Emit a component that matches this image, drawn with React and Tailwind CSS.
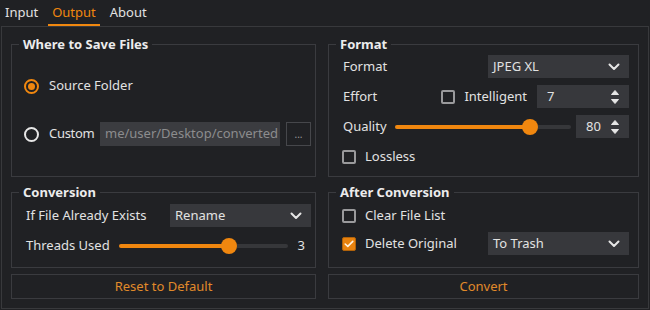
function Chevron() {
  return (
    <svg width="12" height="8" viewBox="0 0 12 8" className="shrink-0">
      <path d="M1.5 1.5 L6 6 L10.5 1.5" fill="none" stroke="#e6e6e6" strokeWidth="2" strokeLinecap="round" strokeLinejoin="round" />
    </svg>
  );
}

function Arrows() {
  return (
    <svg width="10" height="16" viewBox="0 0 10 16" className="shrink-0">
      <path d="M5 1.5 L8.5 5.5 L1.5 5.5 Z" fill="#e6e6e6" stroke="#e6e6e6" strokeWidth="1" strokeLinejoin="round" />
      <path d="M5 14.5 L8.5 10.5 L1.5 10.5 Z" fill="#e6e6e6" stroke="#e6e6e6" strokeWidth="1" strokeLinejoin="round" />
    </svg>
  );
}

function Select({ value, className }) {
  return (
    <div className={`flex h-[23px] items-center justify-between bg-[#37383c] pl-[5px] pr-[9px] ${className}`}>
      <span>{value}</span>
      <Chevron />
    </div>
  );
}

function Spin({ value, className }) {
  return (
    <div className={`flex h-[23px] items-center justify-between bg-[#37383c] pl-[10px] pr-[9px] ${className}`}>
      <span>{value}</span>
      <Arrows />
    </div>
  );
}

function Checkbox({ checked }) {
  if (checked) {
    return (
      <span className="flex h-[14px] w-[14px] shrink-0 items-center justify-center rounded-[2px] border border-[#b0620a] bg-[#e8820e]">
        <svg width="10" height="8" viewBox="0 0 10 8">
          <path d="M1.2 4 L3.8 6.4 L8.8 1.4" fill="none" stroke="#fff3e0" strokeWidth="1.6" strokeLinecap="round" strokeLinejoin="round" />
        </svg>
      </span>
    );
  }
  return <span className="h-[14px] w-[14px] shrink-0 rounded-[2px] border-2 border-[#9a9a9c]" />;
}

function Radio({ checked }) {
  if (checked) {
    return (
      <span className="flex h-[15px] w-[15px] shrink-0 items-center justify-center rounded-full border-2 border-[#f0870f]">
        <span className="h-[7px] w-[7px] rounded-full bg-[#f0870f]" />
      </span>
    );
  }
  return <span className="h-[15px] w-[15px] shrink-0 rounded-full border-2 border-[#e6e6e6]" />;
}

function Slider({ pct, className }) {
  return (
    <div className={`relative flex h-[18px] items-center ${className}`}>
      <div className="h-[4px] w-full rounded-full bg-[#36373a]">
        <div className="h-full rounded-full bg-[#f0870f]" style={{ width: `${pct}%` }} />
      </div>
      <div
        className="absolute top-[1px] h-[16px] w-[16px] -translate-x-1/2 rounded-full bg-[#f0870f]"
        style={{ left: `${pct}%` }}
      />
    </div>
  );
}

function Group({ title, className, bodyClass, children }) {
  return (
    <fieldset className={`min-w-0 border border-[#3a3b3f] ${className}`}>
      <legend className="ml-[7px] px-[4px] text-[13px] font-bold leading-[16px] text-[#ececec]">{title}</legend>
      <div className={bodyClass}>{children}</div>
    </fieldset>
  );
}

export default function App() {
  return (
    <div
      className="flex h-[310px] w-[650px] flex-col bg-[#202124] text-[13px] text-[#e2e2e2]"
      style={{ fontFamily: '"Noto Sans", "Open Sans", sans-serif' }}
    >
      <div className="flex h-[26px] items-end pl-[1px]">
        <div className="flex h-[26px] items-center px-[4px]">Input</div>
        <div className="ml-[6px] flex h-[26px] flex-col items-center justify-center border-b-2 border-[#f0870f] px-[4px] pt-[2px] text-[#f0870f]">
          Output
        </div>
        <div className="ml-[6px] flex h-[26px] items-center px-[4px]">About</div>
      </div>

      <div className="mx-[1px] mb-[1px] flex flex-1 flex-col border border-[#38393c] px-[9px] pt-[9px]">
        <div className="flex gap-[12px]">
          <Group
            title="Where to Save Files"
            className="flex h-[141px] w-[305px] shrink-0 flex-col"
            bodyClass="flex flex-1 flex-col justify-center gap-[24px] pb-[8px] pl-[12px] pr-[4px]"
          >
            <div className="flex h-[24px] items-center gap-[10px]">
              <Radio checked />
              <span>Source Folder</span>
            </div>
            <div className="flex h-[24px] items-center">
              <Radio />
              <span className="ml-[10px] tracking-[-0.3px]">Custom</span>
              <div className="ml-auto flex h-[24px] w-[180px] items-center overflow-hidden whitespace-nowrap bg-[#3b3c40] px-[5px] text-[#8c8c8e]">
                me/user/Desktop/converted
              </div>
              <div className="ml-[6px] flex h-[24px] w-[25px] shrink-0 items-center justify-center border border-[#46474b] text-[10px] leading-none text-[#9a9a9c]">
                ...
              </div>
            </div>
          </Group>

          <Group
            title="Format"
            className="flex h-[141px] flex-1 flex-col"
            bodyClass="flex flex-col gap-[7px] pl-[14px] pr-[9px] pt-[3px]"
          >
            <div className="flex h-[23px] items-center justify-between">
              <span>Format</span>
              <Select value="JPEG XL" className="w-[141px]" />
            </div>
            <div className="flex h-[23px] items-center">
              <span className="flex-1">Effort</span>
              <Checkbox />
              <span className="ml-[9px] mr-[10px]">Intelligent</span>
              <Spin value="7" className="w-[92px]" />
            </div>
            <div className="flex h-[23px] items-center">
              <span>Quality</span>
              <Slider pct={77} className="ml-[8px] mr-[5px] flex-1" />
              <Spin value="80" className="w-[53px]" />
            </div>
            <div className="flex h-[23px] items-center gap-[9px] ml-[-1px]">
              <Checkbox />
              <span>Lossless</span>
            </div>
          </Group>
        </div>

        <div className="mt-[7px] flex gap-[12px]">
          <Group
            title="Conversion"
            className="flex h-[84px] w-[305px] shrink-0 flex-col"
            bodyClass="flex flex-col gap-[7px] pl-[14px] pr-[4px] pt-[4px]"
          >
            <div className="flex h-[23px] items-center justify-between">
              <span>If File Already Exists</span>
              <Select value="Rename" className="w-[141px]" />
            </div>
            <div className="flex h-[23px] items-center">
              <span>Threads Used</span>
              <Slider pct={65} className="ml-[9px] flex-1" />
              <span className="w-[23px] pr-[6px] text-right">3</span>
            </div>
          </Group>

          <Group
            title="After Conversion"
            className="flex h-[84px] flex-1 flex-col"
            bodyClass="flex flex-col gap-[5px] pl-[13px] pr-[9px] pt-[4px]"
          >
            <div className="flex h-[23px] items-center gap-[9px]">
              <Checkbox />
              <span>Clear File List</span>
            </div>
            <div className="flex h-[23px] items-center">
              <Checkbox checked />
              <span className="ml-[9px] flex-1">Delete Original</span>
              <Select value="To Trash" className="w-[141px]" />
            </div>
          </Group>
        </div>

        <div className="mt-[6px] flex gap-[12px]">
          <button className="flex h-[25px] w-[305px] shrink-0 items-center justify-center border border-[#3a3b3f] text-[#e08a2a]">
            Reset to Default
          </button>
          <button className="flex h-[25px] flex-1 items-center justify-center border border-[#3a3b3f] text-[#e08a2a]">
            Convert
          </button>
        </div>
      </div>
    </div>
  );
}
